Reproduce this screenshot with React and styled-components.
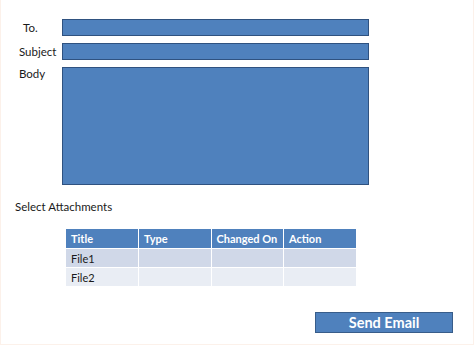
import styled, {createGlobalStyle} from "styled-components";

const GlobalStyle = createGlobalStyle`
    html, body {
        margin: 0;
        padding: 0;
        background: #ffffff;
    }
    body {
        font-family: Lato, "Open Sans", "Liberation Sans", sans-serif;
        color: #1a1a1a;
    }
`

const columns = ["Title", "Type", "Changed On", "Action"]
const files = ["File1", "File2"]

function App() {
    return (
        <>
            <GlobalStyle/>
            <Page>
                <FormGrid>
                    <Label $indent={4}>To.</Label>
                    <Field/>
                    <Label>Subject</Label>
                    <Field/>
                    <Label $top>Body</Label>
                    <Field $tall/>
                </FormGrid>

                <SectionTitle>Select Attachments</SectionTitle>

                <Table>
                    <thead>
                        <tr>
                            {columns.map((c) => <Th key={c}>{c}</Th>)}
                        </tr>
                    </thead>
                    <tbody>
                        {files.map((f, i) => (
                            <Row key={f} $alt={i % 2 === 1}>
                                <Td>{f}</Td>
                                <Td/>
                                <Td/>
                                <Td/>
                            </Row>
                        ))}
                    </tbody>
                </Table>

                <Footer>
                    <SendButton>Send Email</SendButton>
                </Footer>
            </Page>
        </>
    );
}

const Page = styled.div`
    width: 474px;
    height: 345px;
    box-sizing: border-box;
    padding-top: 19px;
    border: 1px solid #fcf1ea;
    border-top: none;
    display: flex;
    flex-direction: column;
`

const FormGrid = styled.div`
    display: grid;
    grid-template-columns: 61px 307px;
    grid-template-rows: 17px 17px 118px;
    row-gap: 7px;
`

const Label = styled.div`
    font-size: 11.5px;
    padding-left: ${(p) => 18 + (p.$indent || 0)}px;
    display: flex;
    align-items: ${(p) => (p.$top ? "flex-start" : "center")};
    padding-top: ${(p) => (p.$top ? "0px" : "0")};
    line-height: 14px;
`

const Field = styled.div`
    background: #4f81bd;
    border: 1px solid #2f5280;
    box-sizing: border-box;
    height: ${(p) => (p.$tall ? "118px" : "17px")};
`

const SectionTitle = styled.div`
    font-size: 11.5px;
    line-height: 14px;
    margin-top: 15px;
    padding-left: 14px;
`

const Table = styled.table`
    margin-top: 15px;
    margin-left: 65px;
    width: 290px;
    border-collapse: collapse;
    table-layout: fixed;
    font-size: 11px;
`

const Th = styled.th`
    background: #4f81bd;
    color: #ffffff;
    font-weight: 700;
    text-align: left;
    height: 19px;
    padding: 0 0 0 5px;
    border-left: 1px solid #ffffff;
    &:first-child {
        border-left: none;
    }
`

const Row = styled.tr`
    background: ${(p) => (p.$alt ? "#e9edf4" : "#d0d8e8")};
    border-top: 1px solid #ffffff;
`

const Td = styled.td`
    height: 18px;
    padding: 0 0 0 5px;
    border-left: 1px solid #ffffff;
    color: #1a1a1a;
    &:first-child {
        border-left: none;
    }
`

const Footer = styled.div`
    display: flex;
    margin-top: 26px;
    padding-left: 314px;
`

const SendButton = styled.button`
    width: 138px;
    height: 21px;
    background: #4f81bd;
    border: 1px solid #385d8a;
    color: #ffffff;
    font-family: Lato, "Open Sans", "Liberation Sans", sans-serif;
    font-weight: 700;
    font-size: 14.5px;
    padding: 0;
    line-height: 19px;
    cursor: pointer;
`

export default App;
